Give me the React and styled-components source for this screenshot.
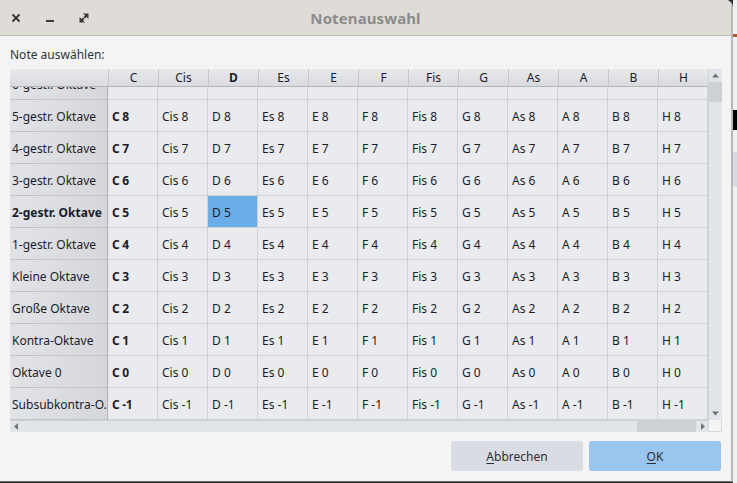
import styled, { createGlobalStyle } from 'styled-components';

const GlobalStyle = createGlobalStyle`
    html, body {
        margin: 0;
        padding: 0;
        background: #2a2a2a;
    }
    body {
        font-family: 'Noto Sans', 'Open Sans', sans-serif;
    }
`;

const NOTES = ['C', 'Cis', 'D', 'Es', 'E', 'F', 'Fis', 'G', 'As', 'A', 'B', 'H'];

const OCTAVES = [
    { name: '6-gestr. Oktave', num: null },
    { name: '5-gestr. Oktave', num: 8 },
    { name: '4-gestr. Oktave', num: 7 },
    { name: '3-gestr. Oktave', num: 6 },
    { name: '2-gestr. Oktave', num: 5 },
    { name: '1-gestr. Oktave', num: 4 },
    { name: 'Kleine Oktave', num: 3 },
    { name: 'Große Oktave', num: 2 },
    { name: 'Kontra-Oktave', num: 1 },
    { name: 'Oktave 0', num: 0 },
    { name: 'Subsubkontra-O.', num: -1 },
];

// currently selected note: D in the 2-gestr. Oktave
const SEL_OCTAVE = 5;
const SEL_NOTE = 'D';

const Screen = styled.div`
    display: flex;
    width: 737px;
    height: 483px;
    overflow: hidden;
`;

const Window = styled.div`
    width: 731px;
    height: 481px;
    display: flex;
    flex-direction: column;
    background: #f4f4f4;
    border-right: 2px solid #b9b9b9;
    border-bottom: 1px solid #6a6a6a;
    border-radius: 0 7px 0 0;
    overflow: hidden;
`;

const Desktop = styled.div`
    flex: 1;
    display: flex;
    flex-direction: column;
    background: #f1f1f1;
`;

const DesktopBlock = styled.div`
    height: ${(p) => p.h}px;
    margin-top: ${(p) => p.top}px;
    background: ${(p) => p.color};
`;

const TitleBar = styled.div`
    height: 35px;
    flex-shrink: 0;
    display: grid;
    grid-template-columns: 1fr auto 1fr;
    align-items: center;
    background: #dfdcd8;
    border-bottom: 1px solid #bdbab6;
`;

const Controls = styled.div`
    display: flex;
    align-items: center;
    gap: 24px;
    padding-left: 11px;
`;

const ControlIcon = styled.svg`
    width: 10px;
    height: 10px;
    display: block;
`;

const Title = styled.div`
    font-weight: 700;
    font-size: 15px;
    color: #8c8c8c;
    letter-spacing: 0.1px;
`;

const Body = styled.div`
    flex: 1;
    display: flex;
    flex-direction: column;
    padding: 0 10px;
`;

const Label = styled.div`
    margin-top: 11px;
    height: 16px;
    line-height: 16px;
    font-size: 12px;
    color: #2e3436;
`;

const TableFrame = styled.div`
    margin-top: 6px;
    display: grid;
    grid-template-columns: 698px 14px;
    grid-template-rows: 351px 12px;
    background: #e9ebee;
    font-size: 12px;
    color: #1c1c2c;
`;

const GridView = styled.div`
    display: flex;
    flex-direction: column;
    overflow: hidden;
`;

const HeaderRow = styled.div`
    display: flex;
    height: 18px;
    flex-shrink: 0;
    background: linear-gradient(#e7e9ec, #d9dbdf);
    border-bottom: 1px solid #b3b5b8;
    box-sizing: border-box;
`;

const HeaderCorner = styled.div`
    width: 98px;
    flex-shrink: 0;
`;

const ColHead = styled.div`
    width: 50px;
    flex-shrink: 0;
    display: flex;
    align-items: center;
    justify-content: center;
    border-left: 1px solid #c4c6ca;
    box-sizing: border-box;
    font-weight: ${(p) => (p.active ? 700 : 400)};
`;

const Viewport = styled.div`
    flex: 1;
    overflow: hidden;
`;

/* the list is scrolled down so only the bottom of the first row shows */
const Rows = styled.div`
    margin-top: -19px;
`;

const Row = styled.div`
    display: flex;
    height: 32px;
`;

const RowHead = styled.div`
    width: 98px;
    flex-shrink: 0;
    display: flex;
    align-items: center;
    padding: 2px 0 0 2px;
    box-sizing: border-box;
    white-space: nowrap;
    background: linear-gradient(90deg, #e1e3e7, #d5d7db);
    border-right: 1px solid #aeb0b3;
    border-bottom: 1px solid #c2c4c7;
    font-weight: ${(p) => (p.active ? 700 : 400)};
`;

const Cell = styled.div`
    width: 50px;
    flex-shrink: 0;
    display: flex;
    align-items: center;
    padding: 2px 0 0 4px;
    box-sizing: border-box;
    white-space: nowrap;
    background: ${(p) => (p.selected ? '#6aaee8' : '#e9ebee')};
    border-right: 1px solid #cfd1d4;
    border-bottom: 1px solid #cfd1d4;
    font-weight: ${(p) => (p.bold ? 700 : 400)};
    letter-spacing: ${(p) => (p.bold ? '-0.3px' : '0')};
`;

const VScroll = styled.div`
    display: flex;
    flex-direction: column;
    background: #e1e4e9;
    border-left: 1px solid #d0d2d6;
`;

const HScroll = styled.div`
    display: flex;
    background: #e1e4e9;
    border-top: 1px solid #cfd1d4;
`;

const Arrow = styled.div`
    flex-shrink: 0;
    width: ${(p) => (p.vertical ? 'auto' : '12px')};
    height: ${(p) => (p.vertical ? '13px' : 'auto')};
    display: flex;
    align-items: center;
    justify-content: center;
`;

const Triangle = styled.svg`
    width: 7px;
    height: 7px;
    display: block;
`;

const Thumb = styled.div`
    flex-shrink: 0;
    background: #cdd0d4;
    ${(p) => (p.vertical ? 'height: 20px;' : 'width: 59px;')}
`;

const Track = styled.div`
    flex: 1;
`;

const Corner = styled.div`
    background: #f4f4f4;
    border: 1px solid #d4d6d9;
    border-top: none;
    box-sizing: border-box;
`;

const Buttons = styled.div`
    display: flex;
    justify-content: flex-end;
    gap: 6px;
    margin-top: 9px;
`;

const Button = styled.button`
    width: 132px;
    height: 30px;
    border: none;
    border-radius: 3px;
    font-family: 'Noto Sans', 'Open Sans', sans-serif;
    font-size: 12px;
    color: #2b2f33;
    background: ${(p) => (p.primary ? '#99c5ee' : '#d9dce2')};
    padding: 0;

    u {
        text-decoration-thickness: 1px;
        text-underline-offset: 2px;
    }
`;

function ArrowIcon({ dir }) {
    const pts = {
        up: '0,5.5 3.5,1.5 7,5.5',
        down: '0,1.5 3.5,5.5 7,1.5',
        left: '5,0 1,3.5 5,7',
        right: '2,0 6,3.5 2,7',
    }[dir];
    return (
        <Triangle viewBox="0 0 7 7">
            <polygon points={pts} fill="#6f7378" />
        </Triangle>
    );
}

function App() {
    return (
        <Screen>
            <GlobalStyle />
            <Window>
                <TitleBar>
                    <Controls>
                        <ControlIcon viewBox="0 0 10 10">
                            <path d="M1.5 1.5l7 7M8.5 1.5l-7 7" stroke="#3b3b3b" strokeWidth="2" />
                        </ControlIcon>
                        <ControlIcon viewBox="0 0 10 10">
                            <path d="M1 8h8" stroke="#3b3b3b" strokeWidth="2" />
                        </ControlIcon>
                        <ControlIcon viewBox="0 0 10 10">
                            <path d="M4 0.5h5.5v5.5l-2-2-1.5 1.5-1.5-1.5 1.5-1.5z" fill="#3b3b3b" />
                            <path d="M6 9.5h-5.5v-5.5l2 2 1.5-1.5 1.5 1.5-1.5 1.5z" fill="#3b3b3b" />
                        </ControlIcon>
                    </Controls>
                    <Title>Notenauswahl</Title>
                    <div />
                </TitleBar>
                <Body>
                    <Label>Note auswählen:</Label>
                    <TableFrame>
                        <GridView>
                            <HeaderRow>
                                <HeaderCorner />
                                {NOTES.map((n) => (
                                    <ColHead key={n} active={n === SEL_NOTE}>
                                        {n}
                                    </ColHead>
                                ))}
                            </HeaderRow>
                            <Viewport>
                                <Rows>
                                    {OCTAVES.map((o) => (
                                        <Row key={o.name}>
                                            <RowHead active={o.num === SEL_OCTAVE}>{o.name}</RowHead>
                                            {NOTES.map((n) => (
                                                <Cell
                                                    key={n}
                                                    bold={n === 'C'}
                                                    selected={o.num === SEL_OCTAVE && n === SEL_NOTE}
                                                >
                                                    {o.num === null ? '' : `${n} ${o.num}`}
                                                </Cell>
                                            ))}
                                        </Row>
                                    ))}
                                </Rows>
                            </Viewport>
                        </GridView>
                        <VScroll>
                            <Arrow vertical>
                                <ArrowIcon dir="up" />
                            </Arrow>
                            <Thumb vertical />
                            <Track />
                            <Arrow vertical>
                                <ArrowIcon dir="down" />
                            </Arrow>
                        </VScroll>
                        <HScroll>
                            <Arrow>
                                <ArrowIcon dir="left" />
                            </Arrow>
                            <Track />
                            <Thumb />
                            <Arrow>
                                <ArrowIcon dir="right" />
                            </Arrow>
                        </HScroll>
                        <Corner />
                    </TableFrame>
                    <Buttons>
                        <Button>
                            <u>A</u>bbrechen
                        </Button>
                        <Button primary>
                            <u>O</u>K
                        </Button>
                    </Buttons>
                </Body>
            </Window>
            <Desktop>
                <DesktopBlock top={34} h={3} color="#b5542f" />
                <DesktopBlock top={73} h={20} color="#000" />
                <DesktopBlock top={22} h={35} color="#d9dbe0" />
            </Desktop>
        </Screen>
    );
}

export default App;
